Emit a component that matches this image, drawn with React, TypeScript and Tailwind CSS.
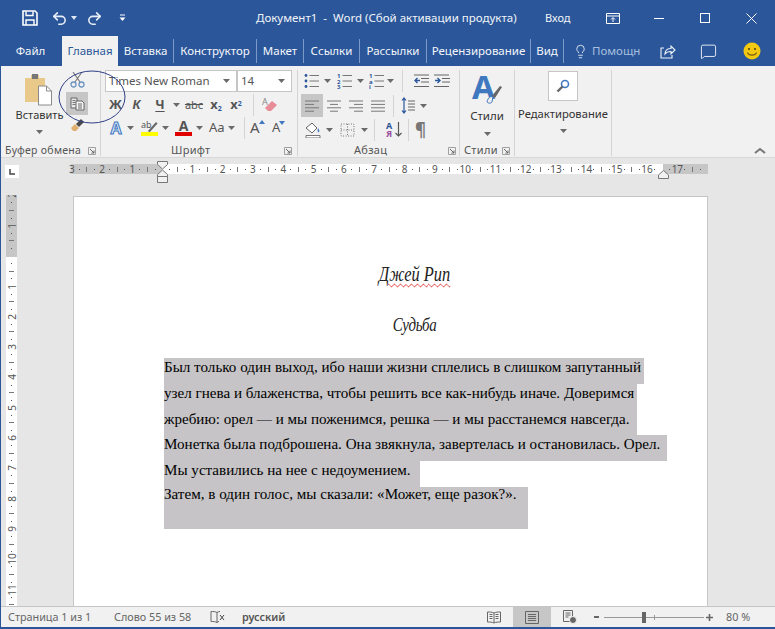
import React from 'react';
import { Lightbulb, MessageSquare, Redo2, Undo2 } from 'lucide-react';

const tabs = [
    { label: 'Вставка', width: 'w-[56px]' },
    { label: 'Конструктор', width: 'w-[83px]' },
    { label: 'Макет', width: 'w-[47px]' },
    { label: 'Ссылки', width: 'w-[56px]' },
    { label: 'Рассылки', width: 'w-[67px]' },
    { label: 'Рецензирование', width: 'w-[104px]' },
    { label: 'Вид', width: 'w-[33px]' },
];

const lines = [
    { text: 'Был только один выход, ибо наши жизни сплелись в слишком запутанный', width: 'w-[480px]' },
    { text: 'узел гнева и блаженства, чтобы решить все как-нибудь иначе. Доверимся', width: 'w-[473px]' },
    { text: 'жребию: орел — и мы поженимся, решка — и мы расстанемся навсегда.', width: 'w-[473px]' },
    { text: 'Монетка была подброшена. Она звякнула, завертелась и остановилась. Орел.', width: 'w-[503px]' },
    { text: 'Мы уставились на нее с недоумением.', width: 'w-[256px]' },
];

const Caret = ({ className = '' }: { className?: string }) => (
    <svg width="7" height="4" viewBox="0 0 7 4" className={`shrink-0 ${className}`}>
        <path d="M0 0h7L3.500 4z" fill="#6a6a6a" />
    </svg>
);

const Launcher = () => (
    <svg width="8" height="8" viewBox="0 0 8 8" className="shrink-0">
        <path d="M.5.5h7v7h-7z" fill="none" stroke="#a0a0a0" />
        <path d="M2 2l4 4M6 3.500V6H3.500" fill="none" stroke="#666" />
    </svg>
);

const Sep = ({ className = '' }: { className?: string }) => <div className={`w-px h-[22px] bg-[#d4d4d4] shrink-0 ${className}`} />;

const Lines = ({ kind }: { kind: 'left' | 'center' | 'right' | 'justify' }) => {
    const rows = kind === 'justify' ? [[1, 15], [1, 15], [1, 15], [1, 15]]
        : kind === 'left' ? [[1, 15], [1, 10], [1, 15], [1, 10]]
        : kind === 'center' ? [[1, 15], [4, 12], [1, 15], [4, 12]]
        : [[1, 15], [6, 15], [1, 15], [6, 15]];
    return (
        <svg width="16" height="14" viewBox="0 0 16 14">
            {rows.map((r, i) => <path key={i} d={`M${r[0]} ${2 + i * 3.4}H${r[1]}`} stroke="#777" strokeWidth="1" />)}
        </svg>
    );
};

const ListIcon = ({ marks }: { marks: string[] }) => (
    <svg width="15" height="16" viewBox="0 0 15 16">
        {marks.map((m, i) => (
            <g key={i}>
                {m === '•'
                    ? <circle cx="2" cy={2.5 + i * 5.5} r="1.4" fill="#2b579a" />
                    : <text x="0" y={5 + i * 5.5} fontSize="6" fontWeight="700" fill="#2b579a">{m}</text>}
                <path d={`M5.5 ${2.5 + i * 5.5}H15`} stroke="#777" strokeWidth="1" />
            </g>
        ))}
    </svg>
);

const Slots = ({ from, to }: { from: number; to: number }) => {
    const slots = [];
    for (let k = from; k <= to; k++) slots.push(k);
    return (
        <>
            {slots.map((k) => (
                <div key={k} className="w-[7.58px] h-full shrink-0 flex items-center justify-center text-[10px] leading-none text-[#555]">
                    {k % 4 === 0 ? Math.abs(k / 4) : k % 4 === 2 || k % 4 === -2 ? <div className="w-px h-[5px] bg-[#777]" /> : <div className="w-px h-px bg-[#555]" />}
                </div>
            ))}
        </>
    );
};

const VSlots = ({ from, to }: { from: number; to: number }) => {
    const slots = [];
    for (let k = from; k <= to; k++) slots.push(k);
    return (
        <>
            {slots.map((k) => (
                <div key={k} className="h-[7.58px] w-full shrink-0 flex items-center justify-center text-[10px] leading-none text-[#555]">
                    {k % 4 === 0
                        ? <span className="-rotate-90">{Math.abs(k / 4)}</span>
                        : k % 4 === 2 || k % 4 === -2 ? <div className="h-px w-[5px] bg-[#777]" /> : <div className="w-px h-px bg-[#555]" />}
                </div>
            ))}
        </>
    );
};

const TitleBar = () => (
    <div className="h-[36px] flex items-center shrink-0 text-white relative">
        <svg width="16" height="16" viewBox="0 0 16 16" className="ml-[21px] shrink-0">
            <path d="M1 1h12l2 2v12H1z" fill="none" stroke="#fff" strokeWidth="1.6" />
            <path d="M4 1.500v4h7v-4M4 15v-5h8v5" fill="none" stroke="#fff" strokeWidth="1.4" />
        </svg>
        <Undo2 size={17} strokeWidth={2.2} className="ml-[13px] text-[#e8eef8] shrink-0" />
        <svg width="6" height="4" viewBox="0 0 6 4" className="ml-[3px] shrink-0"><path d="M0 0h6L3 4z" fill="#dfe7f3" /></svg>
        <Redo2 size={17} strokeWidth={2.2} className="ml-[9px] text-[#e8eef8] shrink-0" />
        <svg width="7" height="8" viewBox="0 0 7 8" className="ml-[16px] shrink-0">
            <path d="M1 1h5" stroke="#fff" />
            <path d="M.5 3.500h6L3.500 7z" fill="#fff" />
        </svg>
        <div className="ml-[130px] w-[260px] shrink-0 text-[11.500px] text-center whitespace-nowrap text-[#f1f4f9]">Документ1&nbsp; -&nbsp; Word (Сбой активации продукта)</div>
        <div className="ml-[29px] w-[30px] shrink-0 text-[11px] text-[#f1f4f9]">Вход</div>
        <svg width="14" height="11" viewBox="0 0 14 11" className="ml-[31px] shrink-0">
            <path d="M.5.5h13v10H.5zM.5 3h13M7 9V5M5 6.500L7 4.500 9 6.500" fill="none" stroke="#fff" />
        </svg>
        <div className="ml-[34px] w-[10px] h-px bg-white shrink-0" />
        <div className="ml-[36px] w-[10px] h-[10px] border border-white shrink-0" />
        <svg width="11" height="11" viewBox="0 0 11 11" className="ml-[36px] shrink-0"><path d="M.5.5l10 10M10.500.5l-10 10" stroke="#fff" /></svg>
    </div>
);

const TabBar = () => (
    <div className="h-[30px] flex items-center shrink-0 text-[11.500px] text-[#f4f6fa]">
        <div className="w-[61px] shrink-0 text-center pr-[2px]">Файл</div>
        <div className="w-[56px] shrink-0 h-full bg-[#f1f1f1] text-[#2b579a] flex items-center justify-center">Главная</div>
        {tabs.map((tab) => (
            <div key={tab.label} className={`${tab.width} shrink-0 h-[24px] flex items-center justify-center border-r border-[#7c9ac8] whitespace-nowrap`}>
                {tab.label}
            </div>
        ))}
        <Lightbulb size={15} strokeWidth={1.4} className="ml-[9px] text-[#e8eef8] shrink-0" />
        <div className="ml-[4px] w-[50px] shrink-0 text-[#a9bfdf]">Помощн</div>
        <svg width="16" height="15" viewBox="0 0 16 15" className="ml-[18px] shrink-0">
            <path d="M4 4H1v10h11v-3M5 10c0-4 3-5.500 6-5.500V2l4 4-4 4V7.500c-3 0-5 1-6 2.500z" fill="none" stroke="#f1f4f9" strokeWidth="1.1" />
        </svg>
        <MessageSquare size={17} strokeWidth={1.2} className="ml-[24px] text-white shrink-0" />
        <svg width="18" height="18" viewBox="0 0 18 18" className="ml-[26px] shrink-0">
            <circle cx="9" cy="9" r="8.500" fill="#f2c811" />
            <circle cx="6" cy="7" r="1.100" fill="#5a4a10" />
            <circle cx="12" cy="7" r="1.100" fill="#5a4a10" />
            <path d="M4.500 10.500c1 3.500 8 3.500 9 0" fill="none" stroke="#7a5a10" strokeWidth="1.100" />
        </svg>
    </div>
);

const ClipboardGroup = () => (
    <div className="w-[100px] shrink-0 flex flex-col border-r border-[#d4d4d4] mt-[4px] mb-[1px] relative">
        <div className="h-[74px] shrink-0 flex">
            <div className="w-[65px] flex flex-col items-center pl-[12px]">
                <svg width="30" height="34" viewBox="0 0 30 34" className="mt-[3px] -ml-[1px]">
                    <path d="M1 5h6V2h8v3h6v24H1z" fill="#e9c98a" />
                    <path d="M8 1h6v5H8z" fill="#777" />
                    <path d="M14.500 13h8l5 5v14h-13z" fill="#fff" stroke="#8a8a8a" />
                    <path d="M22.500 13v5h5" fill="none" stroke="#8a8a8a" />
                </svg>
                <div className="text-[11px] leading-[14px] mt-[1px] text-[#333] whitespace-nowrap">Вставить</div>
                <Caret className="mt-[8px]" />
            </div>
            <div className="w-[22px] flex flex-col items-center">
                <svg width="15" height="16" viewBox="0 0 15 16" className="mt-[2px]">
                    <path d="M3 0l7 10M12 0L5 10" fill="none" stroke="#777" strokeWidth="1.100" />
                    <circle cx="3.500" cy="12.500" r="2.500" fill="none" stroke="#6f94c2" strokeWidth="1.300" />
                    <circle cx="11.500" cy="12.500" r="2.500" fill="none" stroke="#6f94c2" strokeWidth="1.300" />
                </svg>
                <div className="w-[22px] h-[23px] mt-[4px] bg-[#c6c6c6] flex items-center justify-center">
                    <svg width="15" height="14" viewBox="0 0 15 14">
                        <path d="M1 1h6v10H1z" fill="#e8e8e8" stroke="#666" />
                        <path d="M2.500 3.500h3M2.500 5.500h3M2.500 7.500h3" stroke="#777" />
                        <path d="M6 4h6l2 2v7H6z" fill="#f5f5f5" stroke="#666" />
                        <path d="M8 7h4M8 9h4M8 11h4" stroke="#666" />
                    </svg>
                </div>
                <svg width="15" height="14" viewBox="0 0 15 14" className="mt-[3px]">
                    <path d="M1 10l4-4 4 4-3 3H3z" fill="#e0b070" />
                    <path d="M6 6l5-5 3 3-5 5z" fill="#4a4a4a" />
                </svg>
            </div>
        </div>
        <div className="flex items-center h-[13px] shrink-0 pl-[4px] text-[10.500px] text-[#555] tracking-[0.3px] whitespace-nowrap">
            Буфер обмена
            <div className="ml-auto mr-[4px]"><Launcher /></div>
        </div>
    </div>
);

const FontGroup = () => (
    <div className="w-[197px] shrink-0 flex flex-col border-r border-[#d4d4d4] mt-[4px] mb-[1px] pl-[4px]">
        <div className="h-[74px] shrink-0 flex flex-col">
            <div className="h-[22px] flex text-[11.500px] text-[#555]">
                <div className="w-[132px] h-full bg-white border border-[#c6c6c6] flex items-center pl-[3px] pr-[6px] justify-between whitespace-nowrap">
                    Times New Roman
                    <Caret />
                </div>
                <div className="w-[55px] h-full bg-white border border-[#c6c6c6] flex items-center pl-[3px] pr-[6px] justify-between">
                    14
                    <Caret />
                </div>
            </div>
            <div className="h-[23px] mt-[1px] flex items-center text-[#555] font-bold text-[13px] leading-none">
                <div className="w-[21px] text-center">Ж</div>
                <div className="w-[21px] text-center italic font-['Liberation_Sans',sans-serif]">К</div>
                <div className="w-[26px] text-center underline underline-offset-2">Ч</div>
                <Caret />
                <div className="w-[28px] text-center text-[11px] line-through font-normal">abc</div>
                <div className="w-[18px] -ml-px text-center">x<sub className="text-[7px] text-[#2b579a]">2</sub></div>
                <div className="w-[22px] text-center">x<sup className="text-[7px] text-[#2b579a]">2</sup></div>
                <Sep className="ml-[6px]" />
                <svg width="16" height="16" viewBox="0 0 16 16" className="ml-[8px]">
                    <text x="0" y="8" fontSize="9" fill="#888" fontWeight="400">A</text>
                    <path d="M3 11l7-7 5 4-6 6H6z" fill="#e88c98" />
                </svg>
            </div>
            <div className="h-[23px] flex items-center text-[#555]">
                <div className="w-[22px] text-center text-[16px] leading-none font-bold text-[#d8e6f5] [-webkit-text-stroke:1px_#3f78bf]">A</div>
                <Caret />
                <div className="ml-[6px] w-[19px] flex flex-col items-center">
                    <svg width="17" height="12" viewBox="0 0 17 12">
                        <text x="0" y="8" fontSize="9" fill="#555">ab</text>
                        <path d="M7 11l8-9 1.500 1.500-8 9z" fill="#666" />
                    </svg>
                    <div className="w-[17px] h-[4px] bg-[#ffff00]" />
                </div>
                <Caret className="ml-[3px]" />
                <div className="ml-[5px] w-[19px] flex flex-col items-center">
                    <div className="text-[14px] leading-[13px] font-bold text-[#555]">A</div>
                    <div className="w-[17px] h-[4px] bg-[#e00000]" />
                </div>
                <Caret className="ml-[3px]" />
                <div className="ml-[6px] text-[13px] leading-none w-[16px]">Aa</div>
                <Caret className="ml-[3px]" />
                <Sep className="ml-[9px]" />
                <div className="ml-[5px] text-[15px] leading-none w-[18px] flex items-start">A<svg width="6" height="4" viewBox="0 0 6 4" className="-ml-px"><path d="M0 4h6L3 0z" fill="#3f78bf" /></svg></div>
                <div className="ml-[4px] text-[13px] leading-none w-[18px] flex items-start">A<svg width="6" height="4" viewBox="0 0 6 4" className="-ml-px"><path d="M0 0h6L3 4z" fill="#3f78bf" /></svg></div>
            </div>
        </div>
        <div className="flex items-center h-[13px] shrink-0 text-[11px] text-[#555] tracking-[0.3px] pl-[66px]">
            Шрифт
            <div className="ml-auto mr-[5px]"><Launcher /></div>
        </div>
    </div>
);

const ParagraphGroup = () => (
    <div className="w-[162px] shrink-0 flex flex-col border-r border-[#d4d4d4] mt-[4px] mb-[1px]">
        <div className="h-[74px] shrink-0 flex flex-col">
            <div className="h-[22px] flex items-center pl-[6px]">
                <div className="w-[15px]"><ListIcon marks={['•', '•', '•']} /></div>
                <Caret className="ml-[5px]" />
                <div className="w-[15px] ml-[6px]"><ListIcon marks={['1', '2', '3']} /></div>
                <Caret className="ml-[5px]" />
                <div className="w-[15px] ml-[5px]"><ListIcon marks={['1', 'a', 'i']} /></div>
                <Caret className="ml-[3px]" />
                <Sep className="ml-[8px]" />
                <svg width="16" height="14" viewBox="0 0 16 14" className="ml-[10px]">
                    <path d="M1 1h15M8 4.500h8M8 8h8M1 12.500h15" stroke="#666" />
                    <path d="M7 6.500H2M4.500 4L2 6.500 4.500 9" fill="none" stroke="#2b579a" strokeWidth="1.400" />
                </svg>
                <svg width="16" height="14" viewBox="0 0 16 14" className="ml-[5px]">
                    <path d="M0 1h15M8 4.500h8M8 8h8M0 12.500h15" stroke="#666" />
                    <path d="M1 6.500h5M3.500 4L6 6.500 3.500 9" fill="none" stroke="#2b579a" strokeWidth="1.400" />
                </svg>
            </div>
            <div className="h-[23px] flex items-center pl-[3px] mt-[2px]">
                <div className="w-[22px] h-[23px] bg-[#c6c6c6] flex items-center justify-center"><Lines kind="left" /></div>
                <div className="w-[22px] flex justify-center"><Lines kind="center" /></div>
                <div className="w-[22px] flex justify-center"><Lines kind="right" /></div>
                <div className="w-[22px] flex justify-center"><Lines kind="justify" /></div>
                <Sep className="ml-[4px]" />
                <svg width="15" height="17" viewBox="0 0 15 17" className="ml-[7px]">
                    <path d="M3 1v15M1 3.500L3 1l2 2.500M1 13.500L3 16l2-2.500" fill="none" stroke="#2b579a" strokeWidth="1.200" />
                    <path d="M7 4h7M7 7h7M7 10h7M7 13h7" stroke="#666" />
                </svg>
                <Caret className="ml-[4px]" />
            </div>
            <div className="h-[23px] flex items-center pl-[6px] mt-[1px]">
                <svg width="17" height="17" viewBox="0 0 17 17" className="ml-[1px]">
                    <path d="M1 7l6-5 5 5-5 5z" fill="#fff" stroke="#666" />
                    <path d="M13 7c1 2 2 3 1 4s-2-1-1-4z" fill="#3f78bf" />
                    <path d="M1 14.500h14V17H1z" fill="#fff" stroke="#777" />
                </svg>
                <Caret className="ml-[4px]" />
                <svg width="15" height="14" viewBox="0 0 15 14" className="ml-[7px]">
                    <path d="M1 1h13v12H1zM1 7h13M7.500 1v12" fill="none" stroke="#777" strokeDasharray="1 1.500" />
                </svg>
                <Caret className="ml-[6px]" />
                <Sep className="ml-[6px]" />
                <div className="ml-[9px] w-[10px] flex flex-col items-center text-[9px] leading-[8px] font-bold">
                    <span className="text-[#2b579a]">А</span>
                    <span className="text-[#9b4fa0]">Я</span>
                </div>
                <svg width="7" height="15" viewBox="0 0 7 15" className="ml-[1px]"><path d="M3.500 0v14M.5 11l3 3 3-3" fill="none" stroke="#555" strokeWidth="1.200" /></svg>
                <Sep className="ml-[6px]" />
                <div className="ml-[6px] text-[17px] leading-none font-bold text-[#777]">¶</div>
            </div>
        </div>
        <div className="flex items-center h-[13px] shrink-0 text-[11px] text-[#555] tracking-[0.3px] pl-[56px]">
            Абзац
            <div className="ml-auto mr-[3px]"><Launcher /></div>
        </div>
    </div>
);

const StylesGroup = () => (
    <div className="w-[55px] shrink-0 flex flex-col border-r border-[#d4d4d4] mt-[4px] mb-[1px]">
        <div className="h-[74px] shrink-0 flex flex-col items-center">
            <svg width="30" height="36" viewBox="0 0 30 36" className="mt-[2px]">
                <text x="0" y="27" fontSize="33" fontWeight="700" fill="#3f78bf">A</text>
                <path d="M15 30c1-5 4-6 6-5l-1 5c-2 2-4 1-5 0z" fill="#f0f0f0" stroke="#3f78bf" />
                <path d="M20 24l8-10 2 1-7 11z" fill="#666" />
            </svg>
            <div className="text-[11.500px] leading-[14px] mt-[1px] text-[#333]">Стили</div>
            <Caret className="mt-[9px]" />
        </div>
        <div className="flex items-center h-[13px] shrink-0 text-[11px] text-[#555] tracking-[0.3px] pl-[4px]">
            Стили
            <div className="ml-auto mr-[4px]"><Launcher /></div>
        </div>
    </div>
);

const EditingGroup = () => (
    <div className="w-[97px] shrink-0 flex flex-col items-center border-r border-[#d4d4d4] mt-[4px] mb-[1px]">
        <div className="w-[30px] h-[30px] mt-[1px] bg-white border border-[#c6c6c6] flex items-center justify-center">
            <svg width="14" height="14" viewBox="0 0 14 14">
                <circle cx="9" cy="5" r="3.500" fill="none" stroke="#3f78bf" strokeWidth="1.600" />
                <path d="M6.500 7.500L1.500 12.500" stroke="#666" strokeWidth="2.400" />
            </svg>
        </div>
        <div className="text-[11.200px] leading-[14px] mt-[6px] text-[#333] whitespace-nowrap">Редактирование</div>
        <Caret className="mt-[8px]" />
    </div>
);

const Ribbon = () => (
    <div className="h-[92px] bg-[#f1f1f1] border-b border-[#d8d8d8] flex shrink-0 relative font-['Noto_Sans',sans-serif]">
        <ClipboardGroup />
        <FontGroup />
        <ParagraphGroup />
        <StylesGroup />
        <EditingGroup />
        <svg width="12" height="7" viewBox="0 0 12 7" className="ml-[142px] mt-[81px]"><path d="M1 6l5-4 5 4" fill="none" stroke="#777" strokeWidth="2" /></svg>
        {/* обводка от руки вокруг кнопки копирования */}
        <svg width="70" height="56" viewBox="0 0 70 56" className="absolute left-[57px] top-[3px]">
            <ellipse cx="34" cy="28" rx="33" ry="26" fill="none" stroke="#2f3f86" strokeWidth="1" />
        </svg>
    </div>
);

const HRuler = () => (
    <div className="h-[37px] flex items-start shrink-0 relative pl-[4px]">
        <div className="w-[14px] h-[13px] mt-[7px] bg-white flex items-center justify-center">
            <svg width="6" height="6" viewBox="0 0 6 6"><path d="M1 0v5h5" fill="none" stroke="#444" strokeWidth="1.500" /></svg>
        </div>
        <div className="ml-[52px] mt-[6px] h-[10px] flex">
            <div className="w-[91px] h-full bg-[#c6c6c6] flex">
                <div className="flex -ml-[3px] h-full"><Slots from={-12} to={-1} /></div>
            </div>
            <div className="w-[501px] h-full bg-white flex pl-[3.800px]"><Slots from={1} to={65} /></div>
            <div className="w-[45px] h-full bg-[#c6c6c6] flex pl-[3px]"><Slots from={67} to={71} /></div>
        </div>
        <svg width="11" height="22" viewBox="0 0 11 22" className="absolute left-[156px] top-[3px]">
            <path d="M.5.5h10v3L5.500 8 .5 3.500zM5.500 9l5 4.500v2H.5v-2zM.5 15.500h10v6H.5z" fill="#f1f1f1" stroke="#777" />
        </svg>
        <svg width="11" height="9" viewBox="0 0 11 9" className="absolute left-[657px] top-[12px]">
            <path d="M5.500.5l5 4.500v3.500H.5V5z" fill="#f1f1f1" stroke="#777" />
        </svg>
    </div>
);

const Page = () => (
    <div className="w-[635px] mt-px bg-white border-x border-t border-[#c6c6c6] pl-[90px] font-['Liberation_Serif',serif] text-black">
        <div className="w-[501px] pt-[63px] text-center leading-[28px] italic text-[#222]">
            <div className="text-[20px] underline decoration-wavy decoration-[#e03030] decoration-1 underline-offset-2 scale-x-[0.82]">Джей Рип</div>
            <div className="text-[18px] tracking-[-0.5px] mt-[23px] scale-x-[0.83]">Судьба</div>
        </div>
        <div className="mt-[19px] text-[15.100px] whitespace-nowrap">
            {lines.map((line) => (
                <div key={line.text} className={`${line.width} h-[25.800px] bg-[#c6c4c6] leading-[18px]`}>{line.text}</div>
            ))}
            <div className="w-[364px] h-[42px] bg-[#c6c4c6] leading-[14px]">Затем, в один голос, мы сказали: «Может, еще разок?».</div>
        </div>
    </div>
);

const Workspace = () => (
    <div className="flex-1 min-h-0 bg-[#e6e6e6] flex flex-col overflow-hidden font-['Noto_Sans',sans-serif]">
        <HRuler />
        <div className="flex-1 min-h-0 flex">
            <div className="w-[72px] shrink-0 pl-[5px]">
                <div className="w-[11px] flex flex-col overflow-hidden">
                    <div className="h-[62px] bg-[#c6c6c6] overflow-hidden">
                        <div className="-mt-[3.400px]"><VSlots from={-8} to={-1} /></div>
                    </div>
                    <div className="h-[400px] bg-white overflow-hidden pt-[3px]"><VSlots from={1} to={50} /></div>
                </div>
            </div>
            <Page />
        </div>
    </div>
);

const StatusBar = () => (
    <div className="h-[21px] bg-[#f1f1f1] border-t border-[#c6c6c6] flex items-center shrink-0 text-[10.800px] text-[#666] font-['Noto_Sans',sans-serif] whitespace-nowrap">
        <div className="ml-[7px] w-[106px]">Страница 1 из 1</div>
        <div className="w-[96px]">Слово 55 из 58</div>
        <svg width="15" height="13" viewBox="0 0 15 13">
            <path d="M7 1.500C5.500.5 3 .5 1 .5v10c2 0 4.500 0 6 1 .5-.5 1-.7 2-1M7 1.500V11.500M7 1.500c1-.7 2-1 3-1" fill="none" stroke="#666" />
            <path d="M10 4l4 5M14 4l-4 5" stroke="#444" />
        </svg>
        <div className="ml-[17px] w-[245px] font-semibold text-[#555]">русский</div>
        <svg width="14" height="13" viewBox="0 0 14 13">
            <path d="M7 2C5 1 3 1 .5 1v10c2.500 0 4.500 0 6.500 1 2-1 4-1 6.500-1V1C11 1 9 1 7 2zM7 2v10M2.500 3.500h3M2.500 5.500h3M2.500 7.500h3M8.500 3.500h3M8.500 5.500h3M8.500 7.500h3" fill="none" stroke="#666" />
        </svg>
        <div className="ml-[12px] w-[38px] h-full bg-[#c6c6c6] flex items-center justify-center">
            <svg width="14" height="13" viewBox="0 0 14 13">
                <path d="M.5.5h13v12H.5zM3 3.500h8M3 5.500h8M3 7.500h8M3 9.500h8" fill="none" stroke="#666" />
            </svg>
        </div>
        <svg width="14" height="14" viewBox="0 0 14 14" className="ml-[12px]">
            <path d="M.5.5h9v11H.5zM2.500 3h5M2.500 5h5M2.500 7h3" fill="none" stroke="#666" />
            <circle cx="10" cy="10" r="3.500" fill="#666" stroke="#f1f1f1" />
        </svg>
        <div className="ml-[17px] w-[5px] h-[2px] bg-[#666]" />
        <div className="ml-[5px] w-[100px] h-px bg-[#999] relative">
            <div className="absolute left-[38px] -top-[5px] w-[4px] h-[11px] bg-[#666]" />
            <div className="absolute left-[50px] -top-[2px] w-px h-[5px] bg-[#999]" />
        </div>
        <svg width="7" height="7" viewBox="0 0 7 7" className="ml-[2px]"><path d="M0 3.500h7M3.500 0v7" stroke="#666" strokeWidth="1.600" /></svg>
        <div className="ml-[13px]">80 %</div>
    </div>
);

const App: React.FC = () => {
    return (
        <div className="w-[775px] h-[629px] flex flex-col bg-[#2b579a] overflow-hidden border-l border-[#2b579a] border-b-2 font-['Noto_Sans',sans-serif]">
            <TitleBar />
            <TabBar />
            <Ribbon />
            <Workspace />
            <StatusBar />
        </div>
    );
};

export default App;
